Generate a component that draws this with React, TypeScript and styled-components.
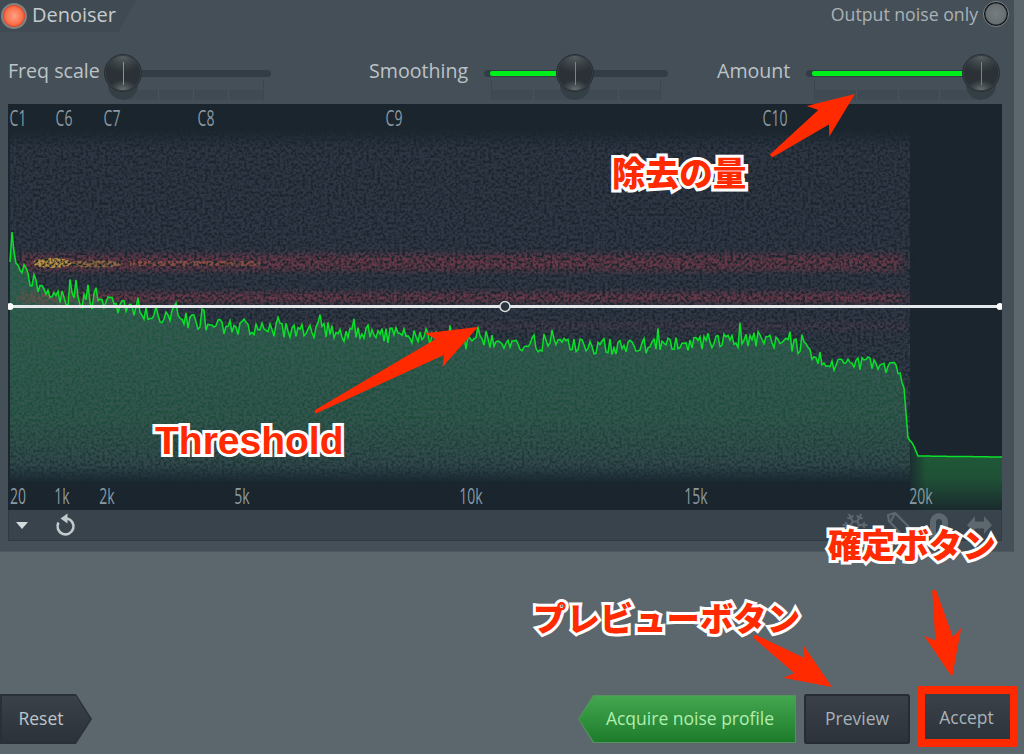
import React from "react";
import styled, { createGlobalStyle } from "styled-components";
import { Snowflake } from "lucide-react";

const Global = createGlobalStyle`
  html, body { margin: 0; padding: 0; background: #5c666d; overflow: hidden; }
  * { box-sizing: border-box; }
`;

const UI_FONT = `"Open Sans", "Noto Sans", sans-serif`;
const RED = "#ff2a00";

const Stage = styled.div`
  position: relative;
  width: 1024px;
  height: 754px;
  overflow: hidden;
  background: #5c666d;
  font-family: ${UI_FONT};
  display: flex;
  flex-direction: column;
`;
const Upper = styled.section`
  width: 1014px;
  height: 552px;
  flex: none;
  background: #454f57;
  border-bottom: 1px solid #4d575e;
  display: flex;
  flex-direction: column;
`;
const Header = styled.header`
  height: 35px;
  flex: none;
  display: flex;
  justify-content: space-between;
  padding-right: 5px;
`;
const TitleTab = styled.div`
  width: 136px;
  height: 32px;
  display: flex;
  align-items: center;
  gap: 5px;
  padding-left: 1px;
  background: #3f4a52;
  clip-path: polygon(0 0, 100% 0, 87% 100%, 0 100%);
`;
const PowerLed = styled.span`
  width: 26px;
  height: 26px;
  flex: none;
  border-radius: 50%;
  border: 2px solid #7d8488;
  background: radial-gradient(circle at 50% 50%, #ffa482 0%, #fb6f4c 55%, #e0401f 72%, #4a1006 88%);
`;
const TitleText = styled.span`
  font-size: 20px;
  margin-top: -3px;
  color: #c5cbce;
`;
const OutputToggle = styled.div`
  display: flex;
  align-items: center;
  gap: 5px;
  height: 28px;
  font-size: 17.7px;
  color: #aab2b6;
`;
const ToggleLed = styled.span`
  width: 26px;
  height: 26px;
  border-radius: 50%;
  border: 1.5px solid #7a8287;
  background: radial-gradient(circle, #757d81 0%, #686f73 58%, #101315 66%, #101315 86%);
`;

const Controls = styled.div`
  height: 69px;
  flex: none;
  padding-left: 8px;
  display: grid;
  grid-template-columns: 361px 348px 1fr;
`;
const Group = styled.div<{ $w: number }>`
  width: ${(p) => p.$w}px;
  display: flex;
  justify-content: space-between;
  align-items: flex-start;
`;
const Label = styled.span`
  font-size: 19.6px;
  line-height: 24px;
  margin-top: 24px;
  color: #bcc3c7;
`;
const Slider = styled.div<{ $w: number }>`
  position: relative;
  width: ${(p) => p.$w}px;
  height: 69px;
`;
const Track = styled.div`
  position: absolute;
  left: 0;
  right: 0;
  top: 35px;
  height: 7px;
  border-radius: 4px;
  background: #333d45;
`;
const Fill = styled.div<{ $l: number; $w: number }>`
  position: absolute;
  left: ${(p) => p.$l}px;
  width: ${(p) => p.$w}px;
  top: 36px;
  height: 5px;
  border-radius: 2px;
  background: #00f01c;
`;
const Scale = styled.div<{ $l: number; $w: number }>`
  position: absolute;
  left: ${(p) => p.$l}px;
  width: ${(p) => p.$w}px;
  top: 45px;
  height: 20px;
  display: flex;
  align-items: flex-end;
  border-right: 1px solid #3c464e;
  border-left: 1px solid #3c464e;
`;
const ScaleCell = styled.div`
  flex: 1;
  height: 10px;
  background: #404a52;
  border-right: 1px solid #4a545b;
  &:last-child { border-right: 0; }
`;
const Knob = styled.div<{ $c: number; $line: string }>`
  position: absolute;
  top: 19px;
  left: ${(p) => p.$c - 19}px;
  width: 38px;
  height: 38px;
  border-radius: 50%;
  border: 1px solid #2a3035;
  background:
    radial-gradient(ellipse 40% 28% at 50% 97%, #687175 0%, #444b4f 55%, transparent 100%),
    radial-gradient(ellipse 60% 45% at 50% 4%, #555e62 0%, #3b4246 55%, transparent 100%),
    #2b3136;
  box-shadow: inset 0 0 0 1px #384045;
  &::before {
    content: "";
    position: absolute;
    z-index: -1;
    left: 3px;
    top: 16px;
    width: 30px;
    height: 29px;
    border-radius: 0 0 15px 15px;
    background: #343e45;
  }
  &::after {
    content: "";
    position: absolute;
    left: 18px;
    top: 7px;
    width: 1px;
    height: 23px;
    background: ${(p) => p.$line};
  }
`;
const KnobLayer = styled.div`
  position: absolute;
  inset: 0;
  z-index: 0;
  isolation: isolate;
`;

const Display = styled.div`
  position: relative;
  margin-left: 8px;
  width: 994px;
  height: 437px;
  flex: none;
  background: #1a252d;
  display: flex;
  flex-direction: column;
`;
const Plot = styled.div`
  position: relative;
  height: 406px;
  flex: none;
`;
const PlotSvg = styled.svg`
  display: block;
  width: 994px;
  height: 406px;
`;
const AxisLabel = styled.span<{ $x: number; $bottom?: boolean }>`
  position: absolute;
  left: ${(p) => p.$x}px;
  ${(p) => (p.$bottom ? "bottom: 1px;" : "top: 1px;")}
  font-size: 21.5px;
  line-height: 26px;
  color: #8a99a2;
  transform: translateX(-50%) scaleX(0.65);
`;
const Toolbar = styled.div`
  flex: 1;
  display: flex;
  align-items: center;
  background: #38434b;
  border: 1px solid #2f3a41;
  border-top: 0;
  padding-left: 7px;
`;
const Caret = styled.span`
  width: 0;
  height: 0;
  border-left: 6.5px solid transparent;
  border-right: 6.5px solid transparent;
  border-top: 7px solid #d5dadd;
`;
const ResetGlyph = styled.svg`
  margin-left: 26px;
  color: #c3cacd;
`;
const ToolIcons = styled.div`
  margin-left: auto;
  display: flex;
  align-items: center;
  gap: 18px;
  padding-right: 9px;
  color: #5c676e;
`;

const Lower = styled.section`
  flex: 1;
  display: flex;
  align-items: flex-end;
  justify-content: space-between;
  padding: 0 14px 10px 0;
`;
const ButtonBase = styled.button`
  font-family: ${UI_FONT};
  font-size: 17.5px;
  height: 50px;
  padding: 0 0 2px;
  border: 0;
  color: #a9b2b7;
  background: linear-gradient(#3a4149, #2b3239);
  box-shadow: inset 0 0 0 2px #262c32;
`;
const ResetButton = styled(ButtonBase)`
  position: relative;
  isolation: isolate;
  width: 92px;
  padding-right: 10px;
  color: #bfc6ca;
  background: #2a3037;
  box-shadow: none;
  clip-path: polygon(0 0, 76px 0, 100% 50%, 76px 100%, 0 100%);
  &::before {
    content: "";
    position: absolute;
    z-index: -1;
    inset: 2px;
    background: linear-gradient(#3a4149, #2b3239);
    clip-path: polygon(0 0, 74px 0, 100% 50%, 74px 100%, 0 100%);
  }
`;
const RightButtons = styled.div`
  display: flex;
  align-items: center;
`;
const AcquireButton = styled(ButtonBase)`
  position: relative;
  isolation: isolate;
  width: 218px;
  height: 48px;
  margin-right: 8px;
  padding-left: 6px;
  color: #b0efae;
  background: #55935c;
  box-shadow: none;
  clip-path: polygon(15px 0, 100% 0, 100% 100%, 15px 100%, 0 50%);
  &::before {
    content: "";
    position: absolute;
    z-index: -1;
    inset: 1px;
    background: linear-gradient(#45a650, #1c7c2b);
    clip-path: polygon(15px 0, 100% 0, 100% 100%, 15px 100%, 0 50%);
  }
`;
const PreviewButton = styled(ButtonBase)`
  width: 106px;
  margin-right: 15px;
  border-radius: 3px;
`;
const AcceptWrap = styled.div`
  position: relative;
  width: 85px;
  height: 50px;
  &::after {
    content: "";
    position: absolute;
    left: -8px;
    right: -8px;
    top: -8px;
    bottom: -3px;
    border: 8px solid ${RED};
    border-radius: 3px;
  }
`;
const AcceptButton = styled(ButtonBase)`
  width: 85px;
  padding-bottom: 4px;
  padding-right: 2px;
  box-shadow: none;
`;

const Overlay = styled.svg`
  position: absolute;
  left: 0;
  top: 0;
  width: 1024px;
  height: 754px;
  pointer-events: none;
`;
const Callout = styled.span<{ $x: number; $y: number; $size: number; $latin?: boolean }>`
  position: absolute;
  left: ${(p) => p.$x}px;
  top: ${(p) => p.$y}px;
  font-family: ${(p) => (p.$latin ? `"Liberation Sans", sans-serif` : `"Noto Sans CJK JP", sans-serif`)};
  font-weight: ${(p) => (p.$latin ? 700 : 900)};
  font-size: ${(p) => p.$size}px;
  line-height: 1;
  white-space: nowrap;
  color: ${RED};
  -webkit-text-stroke: 6px #fff;
  paint-order: stroke fill;
`;

function rng(seed: number) {
  let s = seed;
  return () => {
    s = (s * 16807) % 2147483647;
    return (s - 1) / 2147483646;
  };
}
const KEY: [number, number][] = [
  [10, 262], [12, 232], [15, 262], [30, 278], [45, 292], [60, 298], [100, 302], [130, 309],
  [170, 317], [220, 326], [300, 332], [400, 336], [470, 342], [600, 347], [700, 344], [760, 338],
  [800, 347], [830, 363], [880, 363], [898, 372], [904, 388], [908, 438], [913, 444], [918, 456], [1002, 457],
];
function baseY(x: number) {
  for (let i = 1; i < KEY.length; i++) {
    if (x <= KEY[i][0]) {
      const [a, b] = KEY[i - 1];
      const [c, d] = KEY[i];
      return b + ((d - b) * (x - a)) / (c - a);
    }
  }
  return 457;
}
function buildCurve() {
  const r = rng(4711);
  const pts: string[] = [];
  for (let x = 10; x <= 1002; x += 2) {
    let y = baseY(x);
    if (x > 18 && x < 902) {
      const v = r();
      const spike = x < 130 ? 28 : 12;
      y += (r() - 0.5) * 16 - (v > 0.82 ? (v - 0.82) * 5.5 * spike : 0);
    }
    pts.push(`${x},${y.toFixed(1)}`);
  }
  return pts;
}
const CURVE = buildCurve();
const LINE_D = "M" + CURVE.join("L");
const SPLIT = 910;
const LEFT_PTS = CURVE.filter((p) => parseFloat(p) <= SPLIT);
const RIGHT_PTS = CURVE.filter((p) => parseFloat(p) >= SPLIT);
const AREA_LEFT = "M" + LEFT_PTS.join("L") + `L${SPLIT},482L10,482Z`;
const AREA_RIGHT = "M" + RIGHT_PTS.join("L") + `L1002,510L${SPLIT},510Z`;

function arrow(tx: number, ty: number, hx: number, hy: number, head = 46, barb = 19, neck = 9) {
  const dx = hx - tx;
  const dy = hy - ty;
  const L = Math.hypot(dx, dy);
  const ux = dx / L;
  const uy = dy / L;
  const nx = -uy;
  const ny = ux;
  const at = (a: number, b: number) => `${(tx + ux * a + nx * b).toFixed(1)},${(ty + uy * a + ny * b).toFixed(1)}`;
  return [
    at(0, 1.8), at(L - head + 7, neck), at(L - head, barb), at(L, 0),
    at(L - head, -barb), at(L - head + 7, -neck), at(0, -1.8),
  ].join(" ");
}

const TOP_LABELS: [string, number][] = [["C1", 10], ["C6", 56], ["C7", 104], ["C8", 198], ["C9", 386], ["C10", 767]];
const BOTTOM_LABELS: [string, number][] = [["20", 10], ["1k", 54], ["2k", 99], ["5k", 234], ["10k", 463], ["15k", 688], ["20k", 913]];

function Chart() {
  return (
    <PlotSvg viewBox="8 104 994 406">
      <defs>
        <filter id="grain" x="0" y="0" width="100%" height="100%">
          <feTurbulence type="fractalNoise" baseFrequency="0.36" numOctaves="2" seed="11" />
          <feColorMatrix values="0 0 0 0 1  0 0 0 0 1  0 0 0 0 1  3 0 0 0 -0.85" />
        </filter>
        <mask id="grainMask" maskUnits="userSpaceOnUse" x="8" y="104" width="994" height="406">
          <rect x="10" y="130" width="905" height="352" fill="#fff" filter="url(#grain)" />
        </mask>
        <filter id="soft" x="-5%" y="-80%" width="110%" height="260%">
          <feGaussianBlur stdDeviation="3" />
        </filter>
        <linearGradient id="greenLeft" gradientUnits="userSpaceOnUse" x1="0" y1="300" x2="0" y2="482">
          <stop offset="0" stopColor="#215a40" />
          <stop offset="0.65" stopColor="#1d4c39" />
          <stop offset="0.85" stopColor="#1d3c36" />
          <stop offset="1" stopColor="#1a2832" />
        </linearGradient>
        <linearGradient id="greenRight" gradientUnits="userSpaceOnUse" x1="0" y1="440" x2="0" y2="510">
          <stop offset="0" stopColor="#1f5e38" />
          <stop offset="0.55" stopColor="#1f5036" />
          <stop offset="1" stopColor="#1a2a2e" />
        </linearGradient>
        <linearGradient id="rightFade" gradientUnits="userSpaceOnUse" x1="906" y1="0" x2="926" y2="0">
          <stop offset="0" stopColor="#000" />
          <stop offset="1" stopColor="#fff" />
        </linearGradient>
        <mask id="rightMask" maskUnits="userSpaceOnUse" x="900" y="430" width="102" height="80">
          <rect x="900" y="430" width="102" height="80" fill="url(#rightFade)" />
        </mask>
        <linearGradient id="haze" gradientUnits="userSpaceOnUse" x1="0" y1="128" x2="0" y2="482">
          <stop offset="0" stopColor="#5d5d78" stopOpacity="0" />
          <stop offset="0.06" stopColor="#5d5d78" stopOpacity="0.32" />
          <stop offset="0.5" stopColor="#5d5d78" stopOpacity="0.34" />
          <stop offset="0.95" stopColor="#5d6a78" stopOpacity="0.36" />
          <stop offset="1" stopColor="#5d6a78" stopOpacity="0" />
        </linearGradient>
        <linearGradient id="bandFade" x1="0" y1="0" x2="1" y2="0">
          <stop offset="0" stopColor="#b83a4c" />
          <stop offset="0.98" stopColor="#b83a4c" />
          <stop offset="1" stopColor="#b83a4c" stopOpacity="0" />
        </linearGradient>
      </defs>
      <path d={AREA_LEFT} fill="url(#greenLeft)" />
      <path d={AREA_RIGHT} fill="url(#greenRight)" mask="url(#rightMask)" />
      <g mask="url(#grainMask)">
        <rect x="10" y="130" width="900" height="352" fill="url(#haze)" />
        <rect x="20" y="254" width="892" height="17" fill="url(#bandFade)" opacity="0.42" filter="url(#soft)" />
        <rect x="20" y="293" width="895" height="9" fill="url(#bandFade)" opacity="0.5" filter="url(#soft)" />
        <rect x="300" y="323" width="610" height="6" fill="#b04060" opacity="0.2" filter="url(#soft)" />
        <ellipse cx="52" cy="263" rx="19" ry="5" fill="#eec440" opacity="0.65" />
        <ellipse cx="95" cy="264" rx="28" ry="3.5" fill="#c8a040" opacity="0.45" />
        <rect x="130" y="261" width="130" height="5" fill="#d87a40" opacity="0.3" />
      </g>
      <path d={LINE_D} fill="none" stroke="#0ae02a" strokeWidth="1.5" />
      <line x1="10" y1="306.5" x2="1000" y2="306.5" stroke="#e4e8eb" strokeWidth="2.8" />
      <circle cx="10" cy="306.5" r="3.5" fill="#fff" />
      <circle cx="1000" cy="306.5" r="3.5" fill="#fff" />
      <circle cx="505" cy="306.5" r="5" fill="#2a343c" stroke="#d8dde0" strokeWidth="1.6" />
    </PlotSvg>
  );
}

function SliderControl(props: {
  width: number; knob: number; line: string;
  fill?: [number, number]; scale: [number, number];
}) {
  const { width, knob, line, fill, scale } = props;
  return (
    <Slider $w={width}>
      <Track />
      {fill && <Fill $l={fill[0]} $w={fill[1]} />}
      <Scale $l={scale[0]} $w={scale[1]}>
        <ScaleCell /><ScaleCell /><ScaleCell /><ScaleCell />
      </Scale>
      <KnobLayer>
        <Knob $c={knob} $line={line} />
      </KnobLayer>
    </Slider>
  );
}

export default function App() {
  return (
    <Stage>
      <Global />
      <Upper>
        <Header>
          <TitleTab>
            <PowerLed />
            <TitleText>Denoiser</TitleText>
          </TitleTab>
          <OutputToggle>
            Output noise only
            <ToggleLed />
          </OutputToggle>
        </Header>
        <Controls>
          <Group $w={263}>
            <Label>Freq scale</Label>
            <SliderControl width={167} knob={19} line="#c08a2c" scale={[19, 141]} />
          </Group>
          <Group $w={299}>
            <Label>Smoothing</Label>
            <SliderControl width={184} knob={91} line="#0ad02a" fill={[6, 85]} scale={[7, 170]} />
          </Group>
          <Group $w={273}>
            <Label>Amount</Label>
            <SliderControl width={184} knob={175} line="#0ad02a" fill={[6, 165]} scale={[8, 168]} />
          </Group>
        </Controls>
        <Display>
          <Plot>
            <Chart />
            {TOP_LABELS.map(([t, x]) => <AxisLabel key={t} $x={x}>{t}</AxisLabel>)}
            {BOTTOM_LABELS.map(([t, x]) => <AxisLabel key={t} $x={x} $bottom>{t}</AxisLabel>)}
          </Plot>
          <Toolbar>
            <Caret />
            <ResetGlyph width="22" height="24" viewBox="0 0 22 24">
              <path d="M13 5.5 A8 8 0 1 1 4.5 9.5" fill="none" stroke="currentColor" strokeWidth="2.6" />
              <path d="M13.5 0.5 V10.5 L6.5 5.5 Z" fill="currentColor" />
            </ResetGlyph>
            <ToolIcons>
              <Snowflake size={28} strokeWidth={1.6} />
              <svg width="24" height="28" viewBox="0 0 24 28" fill="none" stroke="currentColor" strokeWidth="2.2">
                <path d="M1 4 L8 2 L23 17 L16 25 L2 10 Z M8 2 L4 10" />
              </svg>
              <svg width="20" height="28" viewBox="0 0 20 28" fill="none" stroke="currentColor" strokeWidth="6">
                <path d="M4 27 V11 a6 6 0 0 1 12 0 V27" />
              </svg>
              <svg width="25" height="22" viewBox="0 0 28 22" fill="currentColor">
                <path d="M0 11 L9 1 V7 H19 V1 L28 11 L19 21 V15 H9 V21 Z" />
              </svg>
            </ToolIcons>
          </Toolbar>
        </Display>
      </Upper>
      <Lower>
        <ResetButton>Reset</ResetButton>
        <RightButtons>
          <AcquireButton>Acquire noise profile</AcquireButton>
          <PreviewButton>Preview</PreviewButton>
          <AcceptWrap>
            <AcceptButton>Accept</AcceptButton>
          </AcceptWrap>
        </RightButtons>
      </Lower>
      <Overlay viewBox="0 0 1024 754">
        <polygon fill={RED} points={arrow(771, 156, 855, 94)} />
        <polygon fill={RED} points={arrow(315, 412, 478, 327, 50, 19, 9)} />
        <polygon fill={RED} points={arrow(754, 636, 832, 687)} />
        <polygon fill={RED} points={arrow(934, 590, 952, 677)} />
      </Overlay>
      <Callout $x={612} $y={155} $size={33.6}>除去の量</Callout>
      <Callout $x={155} $y={421} $size={39} $latin>Threshold</Callout>
      <Callout $x={828} $y={527} $size={33.6}>確定ボタン</Callout>
      <Callout $x={533} $y={600} $size={33.4}>プレビューボタン</Callout>
    </Stage>
  );
}
